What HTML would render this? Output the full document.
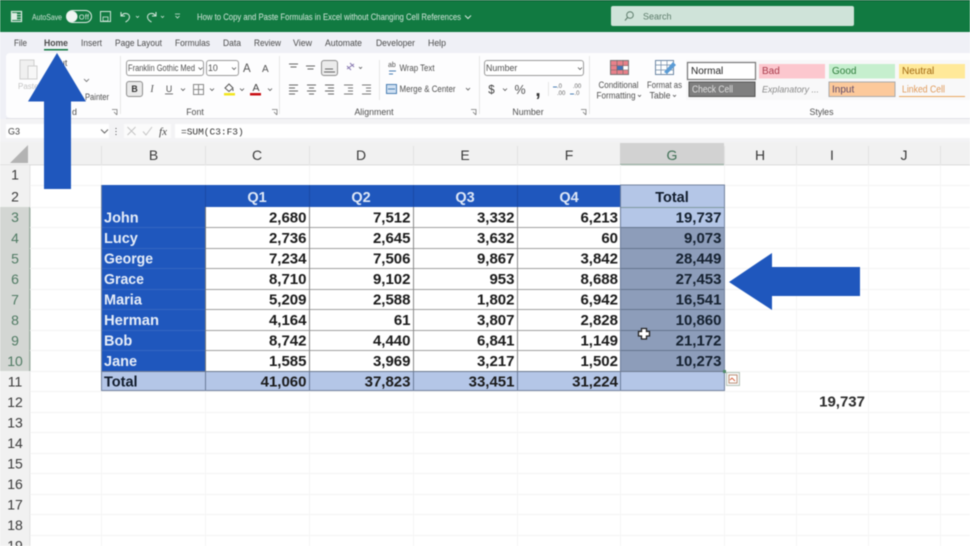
<!DOCTYPE html>
<html>
<head>
<meta charset="utf-8">
<style>
html,body{margin:0;padding:0;width:970px;height:546px;overflow:hidden;background:#fff}
svg{display:block;filter:blur(.5px)}
text{font-family:"Liberation Sans",sans-serif}
.tab{font-size:9.5px;fill:#4a4a4a}
.r{font-size:8.8px;fill:#4f4f4f}
.h{font-size:14px;fill:#3a3a3a;text-anchor:middle}
.n{font-size:14px;fill:#3a3a3a;text-anchor:middle}
.s{fill:#3f6f55}
.c{font-size:15px;font-weight:bold;fill:#1a1a1a;text-anchor:end}
.w{font-size:14.5px;font-weight:bold;fill:#e6edf8}
.q{font-size:14.5px;font-weight:bold;fill:#dfe8f7;text-anchor:middle}
.k{font-size:14.5px;font-weight:bold;fill:#111c2c}
.d{font-size:15px;font-weight:bold;fill:#14202f;text-anchor:end}
.m{text-anchor:middle}
</style>
</head>
<body>
<svg width="970" height="546" viewBox="0 0 970 546" xmlns="http://www.w3.org/2000/svg">
<!-- title bar -->
<rect width="970" height="32" fill="#117a41"/>
<rect width="970" height="1" fill="#0b5a30"/>
<rect x="11.500" y="11.500" width="10" height="10" fill="none" stroke="#dcebe2" stroke-width="1.200"/>
<rect x="11" y="13" width="6" height="7" fill="#dcebe2"/>
<path d="M17 14.500h4M17 17h4M17 19.500h4" stroke="#dcebe2" stroke-width=".7"/>
<text x="32" y="20" font-size="8.300" fill="#cfe4d8" textLength="30" lengthAdjust="spacingAndGlyphs">AutoSave</text>
<rect x="66.500" y="10.500" width="25" height="12" rx="6" fill="none" stroke="#e4efe8"/>
<circle cx="72" cy="16.500" r="5.500" fill="#f0f5f2"/>
<text x="79" y="19.500" font-size="7" fill="#e4efe8" textLength="10">Off</text>
<rect x="100.500" y="11.500" width="10" height="10" fill="none" stroke="#cfe4d8"/>
<rect x="103" y="17" width="5" height="4" fill="none" stroke="#cfe4d8" stroke-width=".8"/>
<path d="M121 12v4h4M121.500 16c2-4 8-3 8 1 0 2-2 4-4 5" fill="none" stroke="#cfe4d8" stroke-width="1.100"/>
<path d="M136 16l1.500 1.500 1.500-1.500" fill="none" stroke="#cfe4d8" stroke-width=".8"/>
<path d="M156 12v4h-4M155.500 16c-2-4-8-3-8 1 0 2 2 4 4 5" fill="none" stroke="#cfe4d8" stroke-width="1.100"/>
<path d="M161 16l1.500 1.500 1.500-1.500" fill="none" stroke="#cfe4d8" stroke-width=".8"/>
<path d="M175 14h5M175.500 16l2 2 2-2" fill="none" stroke="#cfe4d8" stroke-width=".8"/>
<text x="197" y="20" font-size="8.800" fill="#d5e7dc" textLength="264" lengthAdjust="spacingAndGlyphs">How to Copy and Paste Formulas in Excel without Changing Cell References</text>
<path d="M465 15.500l3 3 3-3" fill="none" stroke="#d5e7dc"/>
<rect x="611" y="6" width="243" height="20" rx="2" fill="#cfe3d9"/>
<circle cx="630" cy="15" r="3.300" fill="none" stroke="#5d7c6b"/>
<path d="M627.500 17.500l-2.500 3" stroke="#5d7c6b" fill="none"/>
<text x="643" y="19.500" font-size="9" fill="#5d7c6b">Search</text>

<!-- tabs & ribbon bg -->
<rect y="32" width="970" height="92" fill="#eff0f6"/>
<text x="14" y="46" class="tab" textLength="13" lengthAdjust="spacingAndGlyphs">File</text>
<text x="44" y="46" class="tab" font-weight="bold" textLength="24" lengthAdjust="spacingAndGlyphs">Home</text>
<text x="81" y="46" class="tab" textLength="21" lengthAdjust="spacingAndGlyphs">Insert</text>
<text x="115" y="46" class="tab" textLength="47" lengthAdjust="spacingAndGlyphs">Page Layout</text>
<text x="175" y="46" class="tab" textLength="35" lengthAdjust="spacingAndGlyphs">Formulas</text>
<text x="223" y="46" class="tab" textLength="18" lengthAdjust="spacingAndGlyphs">Data</text>
<text x="254" y="46" class="tab" textLength="27" lengthAdjust="spacingAndGlyphs">Review</text>
<text x="293" y="46" class="tab" textLength="19" lengthAdjust="spacingAndGlyphs">View</text>
<text x="325" y="46" class="tab" textLength="37" lengthAdjust="spacingAndGlyphs">Automate</text>
<text x="376" y="46" class="tab" textLength="39" lengthAdjust="spacingAndGlyphs">Developer</text>
<text x="428" y="46" class="tab" textLength="18" lengthAdjust="spacingAndGlyphs">Help</text>
<rect x="44" y="49" width="24" height="1.500" fill="#117a41"/>
<rect x="6" y="53" width="970" height="65" rx="4" fill="#fdfdfe"/>
<rect x="6" y="118" width="964" height="1.500" fill="#e2e2e8"/>

<!-- clipboard -->
<rect x="20" y="60" width="14" height="19" fill="#f0f0f0" stroke="#cfcfcf"/>
<rect x="28" y="66" width="9" height="13" fill="#f7f7f7" stroke="#cfcfcf"/>
<text x="18" y="89" style="font-size:8px;fill:#c4c4c4">Paste</text>
<text x="60" y="66" class="r">ut</text>
<text x="85" y="100" class="r" textLength="24" lengthAdjust="spacingAndGlyphs">Painter</text>
<path d="M84 79l2.500 2.500 2.500-2.500" fill="none" stroke="#666" stroke-width=".8"/>
<text x="72" y="115" class="r">d</text>
<path d="M112 109.500h5v5M114 112l3 3" fill="none" stroke="#777" stroke-width=".8"/>
<rect x="120" y="56" width=".8" height="58" fill="#e2e2e2"/>

<!-- font -->
<rect x="126.500" y="60.500" width="77" height="15" rx="2.500" fill="#fff" stroke="#9a9a9a"/>
<text x="128" y="71" class="r" textLength="67" lengthAdjust="spacingAndGlyphs">Franklin Gothic Med</text>
<path d="M198.500 67.500l2 2 2-2" fill="none" stroke="#555" stroke-width=".8"/>
<rect x="206.500" y="60.500" width="32" height="15" rx="2.500" fill="#fff" stroke="#9a9a9a"/>
<text x="208" y="71" class="r">10</text>
<path d="M232 67.500l2 2 2-2" fill="none" stroke="#555" stroke-width=".8"/>
<text x="243" y="72" style="font-size:11.500px;fill:#555">A</text>
<text x="262" y="72" style="font-size:10px;fill:#555">A</text>
<rect x="126.500" y="81.500" width="16" height="15" rx="2.500" fill="#eaeaea" stroke="#8d8d8d"/>
<text x="134.500" y="92" class="r m" font-weight="bold" style="fill:#333">B</text>
<text x="152" y="92" style="font-size:10px;fill:#555;font-style:italic;text-anchor:middle;font-family:'Liberation Serif',serif">I</text>
<text x="169" y="92" class="r m">U</text><rect x="165" y="93.500" width="8" height=".8" fill="#555"/>
<path d="M181 88.500l2 2 2-2M210 88.500l2 2 2-2M240 88.500l2 2 2-2M268 88.500l2 2 2-2" fill="none" stroke="#555" stroke-width=".8"/>
<rect x="193.500" y="84.500" width="10" height="10" fill="none" stroke="#8a8a8a"/>
<path d="M198.500 85v10M194 89.500h10" stroke="#8a8a8a"/>
<path d="M229 84l-4 4 4 3.500 4-3.500zM233 89v2" fill="none" stroke="#555"/>
<rect x="224" y="93" width="11" height="2.500" fill="#f2e51e"/>
<text x="256" y="91" style="font-size:10.500px;fill:#444;text-anchor:middle">A</text>
<rect x="250" y="93" width="11" height="2.500" fill="#c80f14"/>
<text x="195" y="115" class="r m">Font</text>
<path d="M272 109.500h5v5M274 112l3 3" fill="none" stroke="#777" stroke-width=".8"/>
<rect x="279" y="56" width=".8" height="58" fill="#e2e2e2"/>

<!-- alignment -->
<path d="M289 64h9M290.500 67h6M306 66h9M307.500 69h6" stroke="#666" fill="none"/>
<rect x="321.500" y="60.500" width="16" height="15" rx="2.500" fill="#ebebeb" stroke="#8d8d8d"/>
<path d="M325 69h8M324 72h11" stroke="#666"/>
<path d="M347 69l7-5M347 66l4 4M350 63l4 4" fill="none" stroke="#8878b0"/>
<path d="M359 67l1.500 1.500 1.500-1.500" fill="none" stroke="#555" stroke-width=".8"/>
<path d="M289 85h9M289 88h6M289 91h9M289 94h6M307 85h9M309 88h5M307 91h9M309 94h5M325 85h9M328 88h6M325 91h9M328 94h6" stroke="#666" fill="none"/>
<path d="M344 85h9M348 88h5M348 91h5M344 94h9M362 85h9M366 88h5M366 91h5M362 94h9" stroke="#777" fill="none"/>
<rect x="379" y="60" width=".8" height="40" fill="#e2e2e2"/>
<text x="388" y="67" style="font-size:7px;fill:#555">ab</text>
<path d="M389 71h7M389 74h4" stroke="#4a7fb3" fill="none"/>
<text x="399.500" y="71" class="r" textLength="35" lengthAdjust="spacingAndGlyphs">Wrap Text</text>
<rect x="386.500" y="84.500" width="10" height="9" fill="#cfe0f2" stroke="#4a7fb3"/>
<path d="M388 89h7" stroke="#4a7fb3"/>
<text x="399.500" y="92" class="r" textLength="56" lengthAdjust="spacingAndGlyphs">Merge &amp; Center</text>
<path d="M466 88l2 2 2-2" fill="none" stroke="#555" stroke-width=".8"/>
<text x="374" y="115" class="r m">Alignment</text>
<path d="M471 109.500h5v5M473 112l3 3" fill="none" stroke="#777" stroke-width=".8"/>
<rect x="479" y="56" width=".8" height="58" fill="#e2e2e2"/>

<!-- number -->
<rect x="484.500" y="60.500" width="99" height="15" rx="2.500" fill="#fff" stroke="#9a9a9a"/>
<text x="486" y="71" class="r">Number</text>
<path d="M578 67.500l2 2 2-2" fill="none" stroke="#555" stroke-width=".8"/>
<text x="491.500" y="93.500" style="font-size:11.500px;fill:#444;text-anchor:middle">$</text>
<path d="M503 88.500l2 2 2-2" fill="none" stroke="#555" stroke-width=".8"/>
<text x="520" y="94" style="font-size:12.500px;fill:#555;text-anchor:middle">%</text>
<text x="538" y="96" style="font-size:19px;font-weight:bold;fill:#333;text-anchor:middle">,</text>
<rect x="548" y="82" width=".8" height="14" fill="#e2e2e2"/>
<text x="557" y="88" style="font-size:6px;fill:#666">.0</text>
<text x="557" y="95" style="font-size:6px;fill:#666">.00</text>
<text x="577" y="88" style="font-size:6px;fill:#666;text-anchor:middle">.00</text>
<text x="577" y="95" style="font-size:6px;fill:#666;text-anchor:middle">.0</text>
<path d="M553 87h4M570 94h4" stroke="#4a7fb3" fill="none"/>
<text x="528" y="115" class="r m">Number</text>
<path d="M581 109.500h5v5M583 112l3 3" fill="none" stroke="#777" stroke-width=".8"/>
<rect x="589" y="56" width=".8" height="58" fill="#e2e2e2"/>

<!-- styles -->
<rect x="610.500" y="60.500" width="18" height="14" fill="#fff" stroke="#777"/>
<rect x="611" y="61" width="17" height="5" fill="#e8808a"/>
<rect x="611" y="66" width="6" height="8" fill="#e8808a"/>
<rect x="617" y="66" width="6" height="4" fill="#3f72b8"/>
<rect x="617" y="70" width="11" height="4" fill="#e8808a"/>
<path d="M617 60v14M623 60v14M611 65.500h17M611 70h17" stroke="#666" stroke-width=".6"/>
<text x="618.500" y="88" class="r m" textLength="40" lengthAdjust="spacingAndGlyphs">Conditional</text>
<text x="596.500" y="98.500" class="r" textLength="39" lengthAdjust="spacingAndGlyphs">Formatting</text>
<path d="M638 95l1.500 1.500 1.500-1.500" fill="none" stroke="#555" stroke-width=".8"/>
<rect x="655.500" y="60.500" width="18" height="14" fill="#fff" stroke="#6d88a5"/>
<path d="M655 65h18M655 70h18M661 60v14M667 60v14" stroke="#6d88a5" stroke-width=".7"/>
<path d="M664 72l9-10 3 3-9 9z" fill="#5a9bd5"/>
<text x="664.500" y="88" class="r m" textLength="35" lengthAdjust="spacingAndGlyphs">Format as</text>
<text x="660" y="98.500" class="r m">Table</text>
<path d="M673 95l1.500 1.500 1.500-1.500" fill="none" stroke="#555" stroke-width=".8"/>
<rect x="686" y="60" width="284" height="40" fill="#f8f8f9"/>
<rect x="687.500" y="62.500" width="68" height="17" fill="#fff" stroke="#777" stroke-width="1.200"/>
<text x="691" y="74" font-size="10" fill="#222">Normal</text>
<rect x="689" y="82" width="66" height="14.500" fill="#7f7f7f" stroke="#555"/>
<text x="692" y="92.500" font-size="10" fill="#e0e0e0" textLength="41" lengthAdjust="spacingAndGlyphs">Check Cell</text>
<rect x="759" y="64" width="66" height="14.500" fill="#fcc7ce"/>
<text x="762" y="74" font-size="10" fill="#a83a4a">Bad</text>
<text x="762" y="92.500" font-size="9.500" font-style="italic" fill="#8a8a8a" textLength="57" lengthAdjust="spacingAndGlyphs">Explanatory ...</text>
<rect x="829" y="64" width="66" height="14.500" fill="#c6efce"/>
<text x="832" y="74" font-size="10" fill="#2f7d3c">Good</text>
<rect x="829" y="82" width="66" height="14.500" fill="#fcc99b" stroke="#aaa"/>
<text x="832" y="92.500" font-size="10" fill="#5f4a68">Input</text>
<rect x="899" y="64" width="66" height="14.500" fill="#ffe999"/>
<text x="902" y="74" font-size="10" fill="#a0660f">Neutral</text>
<text x="902" y="92.500" font-size="10" fill="#e09a5a" textLength="43" lengthAdjust="spacingAndGlyphs">Linked Cell</text>
<rect x="899" y="96" width="66" height="1" fill="#e8a860"/>
<text x="821.500" y="115" class="r m">Styles</text>

<!-- formula bar -->
<rect y="119" width="970" height="23" fill="#f3f3f5"/>
<rect x="6" y="124" width="103" height="14" fill="#fff"/>
<rect x="124" y="124" width="47" height="14" fill="#fbfbfb"/>
<rect x="175" y="124" width="795" height="14" fill="#fff"/>
<text x="8" y="134.500" font-size="9" fill="#444">G3</text>
<path d="M101 129.500l3.500 3.500 3.500-3.500" fill="none" stroke="#666"/>
<path d="M116 128v1M116 131v1M116 134v1" stroke="#555"/>
<path d="M127.500 127l8 8M135.500 127l-8 8M143 131.500l3 3.500 6-8" fill="none" stroke="#c5c5c5"/>
<text x="163" y="135" style="font-size:11px;font-style:italic;font-family:'Liberation Serif',serif;fill:#444;text-anchor:middle">fx</text>
<text x="181" y="134.500" style="font-family:'Liberation Mono',monospace;font-size:9.500px;fill:#333">=SUM(C3:F3)</text>

<!-- column header -->
<rect y="142" width="970" height="23" fill="#f1f1f1"/>
<rect x="620" y="143" width="104" height="22" fill="#d2d2d2"/>
<rect x="620" y="164" width="104" height="1.500" fill="#6f9a82"/>
<rect y="164.500" width="970" height=".8" fill="#d4d4d4"/>
<path d="M10 163L28 145V163Z" fill="#b3b3b3"/>
<path d="M101.500 146v18M205.500 146v18M309.500 146v18M413.500 146v18M517.500 146v18M724.500 146v18M796.500 146v18M868.500 146v18M940.500 146v18" stroke="#e2e2e2"/>
<text x="153.500" y="160" class="h">B</text>
<text x="257" y="160" class="h">C</text>
<text x="361" y="160" class="h">D</text>
<text x="465" y="160" class="h">E</text>
<text x="569" y="160" class="h">F</text>
<text x="672" y="160" class="h s" style="fill:#3f6f55">G</text>
<text x="760" y="160" class="h">H</text>
<text x="832" y="160" class="h">I</text>
<text x="904" y="160" class="h">J</text>

<!-- row header -->
<rect y="165" width="30" height="381" fill="#f1f1f1"/>
<rect y="207" width="30" height="164" fill="#d3d6d3"/>
<rect x="29" y="207" width="1.500" height="164" fill="#9bada1"/>
<rect x="29.500" y="165" width=".8" height="42" fill="#dcdcdc"/>
<rect x="29.500" y="371" width=".8" height="175" fill="#dcdcdc"/>

<!-- gridlines -->
<path d="M30 185.500H970M30 207.500H970M30 227.500H970M30 248.500H970M30 268.500H970M30 289.500H970M30 309.500H970M30 330.500H970M30 350.500H970M30 371.500H970M30 391.500H970M30 412.500H970M30 432.500H970M30 453.500H970M30 473.500H970M30 494.500H970M30 514.500H970M30 535.500H970" stroke="#f3f3f3"/>
<path d="M101.500 165V546M205.500 165V546M309.500 165V546M413.500 165V546M517.500 165V546M620.500 165V546M724.500 165V546M796.500 165V546M868.500 165V546M940.500 165V546" stroke="#f5f5f5"/>

<text x="15" y="179.500" class="n">1</text>
<text x="15" y="201.500" class="n">2</text>
<text x="15" y="222" class="n" style="fill:#4f7a63">3</text>
<text x="15" y="243" class="n" style="fill:#4f7a63">4</text>
<text x="15" y="263.500" class="n" style="fill:#4f7a63">5</text>
<text x="15" y="284" class="n" style="fill:#4f7a63">6</text>
<text x="15" y="304.500" class="n" style="fill:#4f7a63">7</text>
<text x="15" y="325" class="n" style="fill:#4f7a63">8</text>
<text x="15" y="345.500" class="n" style="fill:#4f7a63">9</text>
<text x="15" y="366" class="n" style="fill:#4f7a63">10</text>
<text x="15" y="386.500" class="n">11</text>
<text x="15" y="407" class="n">12</text>
<text x="15" y="427.500" class="n">13</text>
<text x="15" y="448" class="n">14</text>
<text x="15" y="468.500" class="n">15</text>
<text x="15" y="489" class="n">16</text>
<text x="15" y="509.500" class="n">17</text>
<text x="15" y="530" class="n">18</text>
<text x="15" y="550.500" class="n">19</text>

<!-- table fills -->
<rect x="101" y="185" width="519" height="22" fill="#1f57bd"/>
<rect x="101" y="207" width="104" height="164" fill="#1f57bd"/>
<rect x="205" y="207" width="415" height="164" fill="#fff"/>
<rect x="620" y="185" width="104" height="42" fill="#b4c6e7"/>
<rect x="620" y="227" width="104" height="144" fill="#8d9dba"/>
<rect x="101" y="371" width="623" height="20" fill="#b4c6e7"/>
<!-- table borders -->
<path d="M205 227.500H620M205 248.500H620M205 268.500H620M205 289.500H620M205 309.500H620M205 330.500H620M205 350.500H620" stroke="#a0a0a0"/>
<path d="M620 207.500H724" stroke="#7f9a9f"/>
<path d="M620 227.500H724M620 248.500H724M620 268.500H724M620 289.500H724M620 309.500H724M620 330.500H724M620 350.500H724" stroke="#66768f"/>
<path d="M101 227.500H205M101 248.500H205M101 268.500H205M101 289.500H205M101 309.500H205M101 330.500H205M101 350.500H205" stroke="#3466c2"/>
<path d="M309.500 207V371M413.500 207V371M517.500 207V371" stroke="#8a8a8a"/>
<path d="M205.500 207V371" stroke="#777"/>
<path d="M205.500 185V207M309.500 185V207M413.500 185V207M517.500 185V207" stroke="#1a4aa5"/>
<path d="M205.500 371V391M309.500 371V391M413.500 371V391M517.500 371V391M620.500 185V391" stroke="#6b7c9a"/>
<path d="M101 371.500H724" stroke="#6d7a90"/>
<path d="M101.500 185V391M101 390.500H724.500V185H620" fill="none" stroke="#7484a0"/>

<!-- table text -->
<text x="257" y="202" class="q">Q1</text>
<text x="361" y="202" class="q">Q2</text>
<text x="465" y="202" class="q">Q3</text>
<text x="569" y="202" class="q">Q4</text>
<text x="672" y="202" class="k" text-anchor="middle">Total</text>

<text x="104" y="222.500" class="w">John</text>
<text x="104" y="243" class="w">Lucy</text>
<text x="104" y="263.500" class="w" textLength="49" lengthAdjust="spacingAndGlyphs">George</text>
<text x="104" y="284" class="w" textLength="40" lengthAdjust="spacingAndGlyphs">Grace</text>
<text x="104" y="304.500" class="w">Maria</text>
<text x="104" y="325" class="w" textLength="55" lengthAdjust="spacingAndGlyphs">Herman</text>
<text x="104" y="345.500" class="w">Bob</text>
<text x="104" y="366" class="w">Jane</text>
<text x="104" y="386.500" class="k">Total</text>

<text x="306.500" y="222.500" class="c">2,680</text><text x="410.500" y="222.500" class="c">7,512</text><text x="514.500" y="222.500" class="c">3,332</text><text x="618" y="222.500" class="c">6,213</text><text x="721.500" y="222.500" class="d">19,737</text>
<text x="306.500" y="243" class="c">2,736</text><text x="410.500" y="243" class="c">2,645</text><text x="514.500" y="243" class="c">3,632</text><text x="618" y="243" class="c">60</text><text x="721.500" y="243" class="d">9,073</text>
<text x="306.500" y="263.500" class="c">7,234</text><text x="410.500" y="263.500" class="c">7,506</text><text x="514.500" y="263.500" class="c">9,867</text><text x="618" y="263.500" class="c">3,842</text><text x="721.500" y="263.500" class="d">28,449</text>
<text x="306.500" y="284" class="c">8,710</text><text x="410.500" y="284" class="c">9,102</text><text x="514.500" y="284" class="c">953</text><text x="618" y="284" class="c">8,688</text><text x="721.500" y="284" class="d">27,453</text>
<text x="306.500" y="304.500" class="c">5,209</text><text x="410.500" y="304.500" class="c">2,588</text><text x="514.500" y="304.500" class="c">1,802</text><text x="618" y="304.500" class="c">6,942</text><text x="721.500" y="304.500" class="d">16,541</text>
<text x="306.500" y="325" class="c">4,164</text><text x="410.500" y="325" class="c">61</text><text x="514.500" y="325" class="c">3,807</text><text x="618" y="325" class="c">2,828</text><text x="721.500" y="325" class="d">10,860</text>
<text x="306.500" y="345.500" class="c">8,742</text><text x="410.500" y="345.500" class="c">4,440</text><text x="514.500" y="345.500" class="c">6,841</text><text x="618" y="345.500" class="c">1,149</text><text x="721.500" y="345.500" class="d">21,172</text>
<text x="306.500" y="366" class="c">1,585</text><text x="410.500" y="366" class="c">3,969</text><text x="514.500" y="366" class="c">3,217</text><text x="618" y="366" class="c">1,502</text><text x="721.500" y="366" class="d">10,273</text>
<text x="306.500" y="386.500" class="c">41,060</text><text x="410.500" y="386.500" class="c">37,823</text><text x="514.500" y="386.500" class="c">33,451</text><text x="618" y="386.500" class="c">31,224</text>
<text x="865" y="406.500" class="c" style="fill:#2a2a2a">19,737</text>

<!-- quick analysis -->
<rect x="726.500" y="372.500" width="13" height="13" fill="#f5f5f5" stroke="#b5c4b8"/>
<rect x="729" y="375" width="8" height="8" fill="#fff" stroke="#b07a5a" stroke-width=".8"/>
<path d="M730 380l2-2 3 3" fill="none" stroke="#d8603a" stroke-width=".9"/>
<rect x="723" y="370" width="3" height="3" fill="#4f8a68"/>

<!-- cursor -->
<path d="M641.500 328.500h5v3h3v4.500h-3v3h-5v-3h-3v-4.500h3z" fill="#fff" stroke="#222" stroke-width="1.300"/>

<!-- arrows -->
<path d="M57 53L86 101.500H71V189H44V101.500H28Z" fill="#1f57bd"/>
<path d="M729 282L772 253V267H860V296H772V310Z" fill="#1f57bd"/>
</svg>
</body>
</html>
